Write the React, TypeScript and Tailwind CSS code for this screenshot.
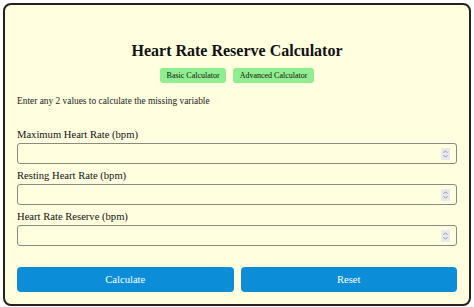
import React from "react";

function Spinner() {
  return (
    <div className="w-[9px] h-[12px] bg-[#e9e9ed] rounded-[1px] flex items-center justify-center">
      <svg width="7" height="10" viewBox="0 0 7 10" fill="none">
        <path d="M1.5 3.8 L3.5 1.8 L5.5 3.8" stroke="#8a8a8a" strokeWidth="0.9" />
        <path d="M1.5 6.2 L3.5 8.2 L5.5 6.2" stroke="#8a8a8a" strokeWidth="0.9" />
      </svg>
    </div>
  );
}

function Field({ label }: { label: string }) {
  return (
    <div className="flex flex-col">
      <div className="text-[10.6px] leading-[13px] text-[#111] mb-[2px]">{label}</div>
      <div className="h-[21px] w-full border border-[#8a8a80] rounded-[3px] flex items-center justify-end pr-[6px] mb-[5px]">
        <Spinner />
      </div>
    </div>
  );
}

export default function App() {
  return (
    <div
      className="w-[474px] h-[307px] bg-white pt-[3px] px-[3px]"
      style={{ fontFamily: '"Liberation Serif", "Times New Roman", serif' }}
    >
      <div className="border-2 border-[#222] rounded-[8px] bg-[#ffffe0] pt-[36px] px-[12px] pb-[12px] flex flex-col">
        <h1 className="text-[16px] leading-[20px] font-bold text-center text-[#111]">
          Heart Rate Reserve Calculator
        </h1>
        <div className="flex justify-center gap-[7px] mt-[7px]">
          <div className="h-[15px] px-[6.5px] bg-[#90ee90] rounded-[3px] text-[8px] leading-[15px] text-[#111]">
            Basic Calculator
          </div>
          <div className="h-[15px] px-[6.5px] bg-[#90ee90] rounded-[3px] text-[8px] leading-[15px] text-[#111]">
            Advanced Calculator
          </div>
        </div>
        <p className="mt-[12px] text-[9.4px] leading-[12px] text-[#222]">
          Enter any 2 values to calculate the missing variable
        </p>
        <div className="mt-[21px] flex flex-col">
          <Field label="Maximum Heart Rate (bpm)" />
          <Field label="Resting Heart Rate (bpm)" />
          <Field label="Heart Rate Reserve (bpm)" />
        </div>
        <div className="mt-[16px] flex gap-[7px]">
          <div className="flex-1 h-[25px] bg-[#0b8dd7] rounded-[4px] text-white text-[10.6px] leading-[25px] text-center">
            Calculate
          </div>
          <div className="flex-1 h-[25px] bg-[#0b8dd7] rounded-[4px] text-white text-[10.6px] leading-[25px] text-center">
            Reset
          </div>
        </div>
      </div>
    </div>
  );
}
